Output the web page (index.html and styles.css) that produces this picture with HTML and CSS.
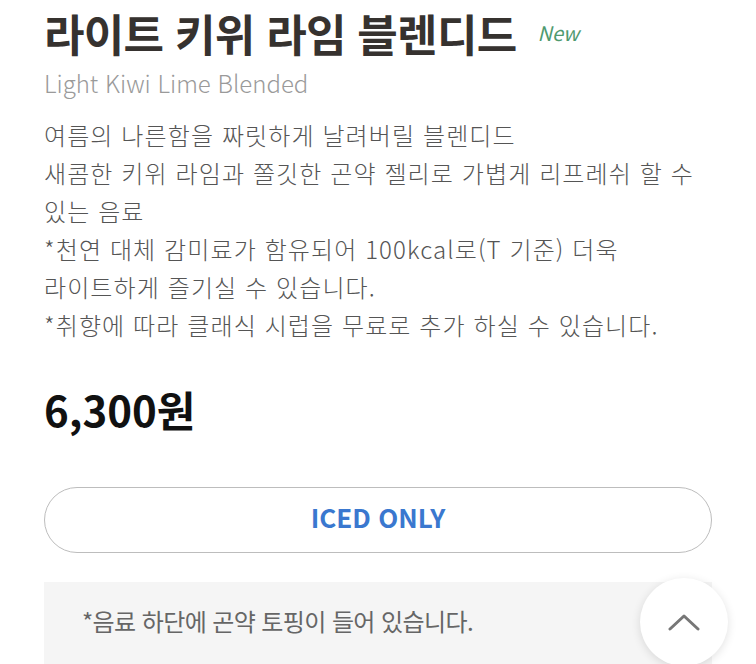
FILE: index.html
```html
<!DOCTYPE html>
<html lang="ko">
<head>
<meta charset="utf-8">
<link rel="stylesheet" href="styles.css">
</head>
<body>
<div class="page">
  <div class="title-row">
    <h1 class="title">라이트 키위 라임 블렌디드</h1>
    <span class="badge-new">New</span>
  </div>
  <p class="subtitle">Light Kiwi Lime Blended</p>
  <p class="desc">여름의 나른함을 짜릿하게 날려버릴 블렌디드<br>새콤한 키위 라임과 쫄깃한 곤약 젤리로 가볍게 리프레쉬 할 수 있는 음료<br>*천연 대체 감미료가 함유되어 100kcal로(T 기준) 더욱<br>라이트하게 즐기실 수 있습니다.<br>*취향에 따라 클래식 시럽을 무료로 추가 하실 수 있습니다.</p>
  <p class="price">6,300원</p>
  <div class="temp-btn">ICED ONLY</div>
  <div class="notice">*음료 하단에 곤약 토핑이 들어 있습니다.</div>
</div>
<button class="top-btn" aria-label="맨 위로">
  <svg width="32" height="18" viewBox="0 0 32 18"><path d="M2 16 L16 3 L30 16" fill="none" stroke="#777" stroke-width="3" stroke-linecap="round" stroke-linejoin="round"/></svg>
</button>
</body>
</html>
```
FILE: styles.css
```css
html, body { margin: 0; padding: 0; background: #fff; }
body { font-family: "Noto Sans CJK KR", "Noto Sans", sans-serif; overflow: hidden; height: 664px; }
.page { padding: 0 44px; }
.title-row { display: flex; align-items: flex-start; gap: 21px; padding-top: 5px; }
.title { margin: 0; font-size: 44px; font-weight: 700; color: #36322f; line-height: 57px; letter-spacing: -0.7px; }
.badge-new { font-size: 20px; font-style: italic; color: #4f9a6f; margin-top: 13px; line-height: 30px; }
.subtitle { margin: 7px 0 0; font-size: 24px; font-weight: 300; color: #9a9a9a; line-height: 28px; }
.desc { margin: 19px 0 0; font-size: 24px; font-weight: 300; color: #555; line-height: 38px; letter-spacing: 1.1px; }
.price { margin: 35px 0 0; font-size: 42px; font-weight: 700; color: #111; line-height: 60px; }
.temp-btn { box-sizing: border-box; margin-top: 48px; height: 66px; padding-bottom: 8px; border: 1px solid #bdbdbd; border-radius: 33px; display: flex; align-items: center; justify-content: center; font-size: 26px; font-weight: 700; color: #3a78cf; }
.notice { margin-top: 29px; background: #f5f5f5; padding: 21px 38px 40px; font-size: 24px; color: #666; line-height: 36px; letter-spacing: -0.6px; }
.top-btn { position: absolute; left: 640px; top: 578px; width: 88px; height: 88px; border-radius: 50%; border: none; background: #fff; box-shadow: 0 2px 10px rgba(0,0,0,0.12); display: flex; align-items: center; justify-content: center; padding: 0; }
```
